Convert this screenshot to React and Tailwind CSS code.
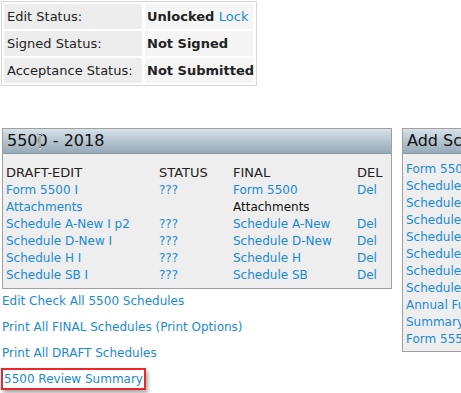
import React from "react";

const link = "text-[#1a8ad4]";

const rows = [
  { draft: "Form 5500 I", status: "???", final: "Form 5500", del: "Del" },
  { draft: "Attachments", status: "", final: "Attachments", finalPlain: true, del: "" },
  { draft: "Schedule A-New I p2", status: "???", final: "Schedule A-New", del: "Del" },
  { draft: "Schedule D-New I", status: "???", final: "Schedule D-New", del: "Del" },
  { draft: "Schedule H I", status: "???", final: "Schedule H", del: "Del" },
  { draft: "Schedule SB I", status: "???", final: "Schedule SB", del: "Del" },
];

const addItems = [
  "Form 5500-SF",
  "Schedule A",
  "Schedule C",
  "Schedule D",
  "Schedule G",
  "Schedule H",
  "Schedule I",
  "Schedule R",
  "Annual Funding Notice",
  "Summary Annual Report",
  "Form 5558",
];

function StatusRow({ label, children }) {
  return (
    <div className="flex gap-[3px] h-[25px]">
      <div className="w-[138px] bg-[#ededed] flex items-center pl-[3px]">{label}</div>
      <div className="w-[108px] bg-[#f5f5f5] flex items-center pl-[2px] font-bold whitespace-nowrap">
        <span>{children}</span>
      </div>
    </div>
  );
}

function PanelHeader({ children }) {
  return (
    <div className="relative h-[25px] bg-gradient-to-b from-[#d6e1e9] to-[#96aab7] border-b border-[#8a9aa5] flex items-center pl-[4px] text-[16px] text-[#111] whitespace-nowrap">
      {children}
    </div>
  );
}

export default function App() {
  return (
    <div
      className="w-[461px] h-[393px] overflow-hidden bg-white text-[#222] text-[13px]"
      style={{ fontFamily: '"DejaVu Sans", Verdana, sans-serif' }}
    >
      <div className="ml-[1px] mt-[1px] w-[256px] border border-[#d6d6d6] p-[2px] flex flex-col gap-[2px]">
        <StatusRow label="Edit Status:">
          Unlocked <span className={`${link} font-normal`}>Lock</span>
        </StatusRow>
        <StatusRow label="Signed Status:">Not Signed</StatusRow>
        <StatusRow label="Acceptance Status:">Not Submitted</StatusRow>
      </div>

      <div className="flex items-start gap-[10px] mt-[42px] ml-[2px]">
        <div className="w-[390px] shrink-0">
          <div className="border border-[#a0a0a0] bg-[#eeeeee]">
            <PanelHeader>
              5500 - 2018
              {/* text cursor over the heading */}
              <svg
                className="absolute left-[33px] top-[4px]"
                width="8"
                height="16"
                viewBox="0 0 8 16"
              >
                <path
                  d="M1 1h2l1 1 1-1h2M4 2v12M1 15h2l1-1 1 1h2"
                  fill="none"
                  stroke="#fff"
                  strokeWidth="2"
                />
                <path
                  d="M1 1h2l1 1 1-1h2M4 2v12M1 15h2l1-1 1 1h2"
                  fill="none"
                  stroke="#333"
                  strokeWidth="0.8"
                />
              </svg>
            </PanelHeader>
            <div className="pl-[3px] pt-[9px] pb-[5px] text-[12px]">
              <div className="grid grid-cols-[153px_74px_124px_30px] h-[18px] items-center text-[13px] text-[#222]">
                <div>DRAFT-EDIT</div>
                <div>STATUS</div>
                <div>FINAL</div>
                <div>DEL</div>
              </div>
              {rows.map((r, i) => (
                <div
                  key={i}
                  className="grid grid-cols-[153px_74px_124px_30px] h-[17px] items-center whitespace-nowrap"
                >
                  <div className={link}>{r.draft}</div>
                  <div className={link}>{r.status}</div>
                  <div className={r.finalPlain ? "text-[#111]" : link}>{r.final}</div>
                  <div className={link}>{r.del}</div>
                </div>
              ))}
            </div>
          </div>

          <div className="flex flex-col text-[12px] -mt-[1px]">
            <div className={`${link} h-[26px] flex items-center`}>Edit Check All 5500 Schedules</div>
            <div className={`${link} h-[26px] flex items-center`}>Print All FINAL Schedules (Print Options)</div>
            <div className={`${link} h-[26px] flex items-center`}>Print All DRAFT Schedules</div>
            <div className="h-[26px] flex items-center -ml-[1px]">
              <span
                className={`${link} border-2 border-[#e8282b] h-[22px] flex items-center pl-[1px] pr-[1px] shadow-[2px_3px_4px_rgba(0,0,0,0.35)]`}
              >
                5500 Review Summary
              </span>
            </div>
          </div>
        </div>

        <div className="w-[140px] shrink-0 border border-[#a0a0a0] bg-[#eeeeee]">
          <PanelHeader>Add Schedules</PanelHeader>
          <div className="pl-[3px] pt-[6px] pb-[4px] text-[12px]">
            {addItems.map((a) => (
              <div key={a} className={`${link} h-[17px] flex items-center whitespace-nowrap`}>
                {a}
              </div>
            ))}
          </div>
        </div>
      </div>
    </div>
  );
}
